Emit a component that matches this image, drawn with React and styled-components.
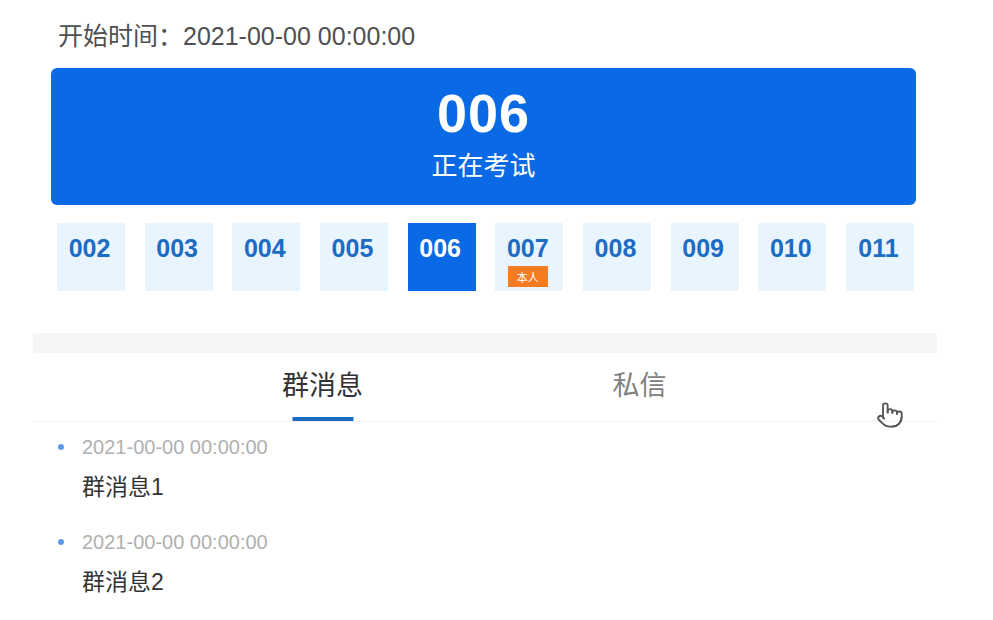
import React from "react";
import styled, { createGlobalStyle } from "styled-components";
import { Pointer } from "lucide-react";

const Global = createGlobalStyle`
  html, body { margin: 0; padding: 0; background: #fff; }
  body { font-family: "Liberation Sans", "Noto Sans CJK SC", sans-serif; }
`;

const Page = styled.div`
  position: relative;
  width: 993px;
  height: 620px;
  overflow: hidden;
  background: #fff;
`;

const Container = styled.div`
  margin-left: 33px;
  width: 904px;
  display: flex;
  flex-direction: column;
`;

const Top = styled.div`
  padding-left: 18px;
  display: flex;
  flex-direction: column;
`;

const StartTime = styled.div`
  height: 68px;
  display: flex;
  align-items: center;
  padding-left: 7px;
  font-size: 25px;
  color: #505050;
`;

const Card = styled.div`
  width: 865px;
  height: 137px;
  border-radius: 6px;
  background: #0a69e4;
  color: #fff;
  display: flex;
  flex-direction: column;
  align-items: center;
`;

const BigNum = styled.div`
  margin-top: 15px;
  font-size: 54px;
  font-weight: 700;
  letter-spacing: 1px;
  line-height: 60px;
`;

const Status = styled.div`
  margin-top: 7px;
  font-size: 26px;
  line-height: 32px;
`;

const Tiles = styled.div`
  margin-top: 18px;
  margin-left: 24px;
  width: 857px;
  display: flex;
  justify-content: space-between;
`;

const Tile = styled.div`
  width: 68px;
  height: 68px;
  background: ${(p) => (p.$active ? "#0a69e4" : "#e8f4fe")};
  color: ${(p) => (p.$active ? "#fff" : "#1c6cc4")};
  display: flex;
  flex-direction: column;
  align-items: center;
  padding: 10px 3px 0 0;
  box-sizing: border-box;
`;

const TileNum = styled.div`
  font-size: 25px;
  font-weight: 700;
  line-height: 30px;
`;

const Badge = styled.div`
  margin-top: 3px;
  width: 40px;
  height: 21px;
  background: #f57c22;
  color: #fff;
  font-size: 11px;
  display: flex;
  align-items: center;
  justify-content: center;
`;

const Band = styled.div`
  margin-top: 42px;
  height: 20px;
  background: #f5f5f5;
`;

const TabBar = styled.div`
  height: 68px;
  border-bottom: 1px solid #f0f0f0;
  display: flex;
  justify-content: center;
  padding-right: 8px;
`;

const Tab = styled.div`
  position: relative;
  width: 317px;
  display: flex;
  justify-content: center;
  padding-top: 18px;
  box-sizing: border-box;
  font-size: 27px;
  line-height: 30px;
  color: ${(p) => (p.$active ? "#333" : "#808080")};
  &::after {
    content: "";
    display: ${(p) => (p.$active ? "block" : "none")};
    position: absolute;
    bottom: 0;
    left: 50%;
    transform: translateX(-50%);
    width: 61px;
    height: 4px;
    background: #1c6cc4;
  }
`;

const List = styled.div`
  padding-top: 13px;
  padding-left: 25px;
  display: flex;
  flex-direction: column;
`;

const Item = styled.div`
  display: flex;
  flex-direction: column;
  margin-bottom: 28px;
`;

const TimeRow = styled.div`
  display: flex;
  align-items: center;
  height: 24px;
  font-size: 20px;
  color: #b0b0b0;
`;

const Dot = styled.span`
  width: 6px;
  height: 6px;
  border-radius: 50%;
  background: #5b9be8;
  margin-right: 18px;
`;

const MsgText = styled.div`
  margin-top: 13px;
  margin-left: 24px;
  font-size: 23px;
  line-height: 30px;
  color: #333;
`;

const Cursor = styled.div`
  position: absolute;
  left: 876px;
  top: 401px;
  color: #555;
`;

const seats = ["002", "003", "004", "005", "006", "007", "008", "009", "010", "011"];
const messages = [
  { time: "2021-00-00 00:00:00", text: "群消息1" },
  { time: "2021-00-00 00:00:00", text: "群消息2" },
];

export default function App() {
  return (
    <Page>
      <Global />
      <Container>
        <Top>
          <StartTime>开始时间：2021-00-00 00:00:00</StartTime>
          <Card>
            <BigNum>006</BigNum>
            <Status>正在考试</Status>
          </Card>
        </Top>
        <Tiles>
          {seats.map((s) => (
            <Tile key={s} $active={s === "006"}>
              <TileNum>{s}</TileNum>
              {s === "007" && <Badge>本人</Badge>}
            </Tile>
          ))}
        </Tiles>
        <Band />
        <TabBar>
          <Tab $active>群消息</Tab>
          <Tab>私信</Tab>
        </TabBar>
        <List>
          {messages.map((m, i) => (
            <Item key={i}>
              <TimeRow>
                <Dot />
                {m.time}
              </TimeRow>
              <MsgText>{m.text}</MsgText>
            </Item>
          ))}
        </List>
      </Container>
      <Cursor>
        <Pointer size={28} strokeWidth={1.6} />
      </Cursor>
    </Page>
  );
}
